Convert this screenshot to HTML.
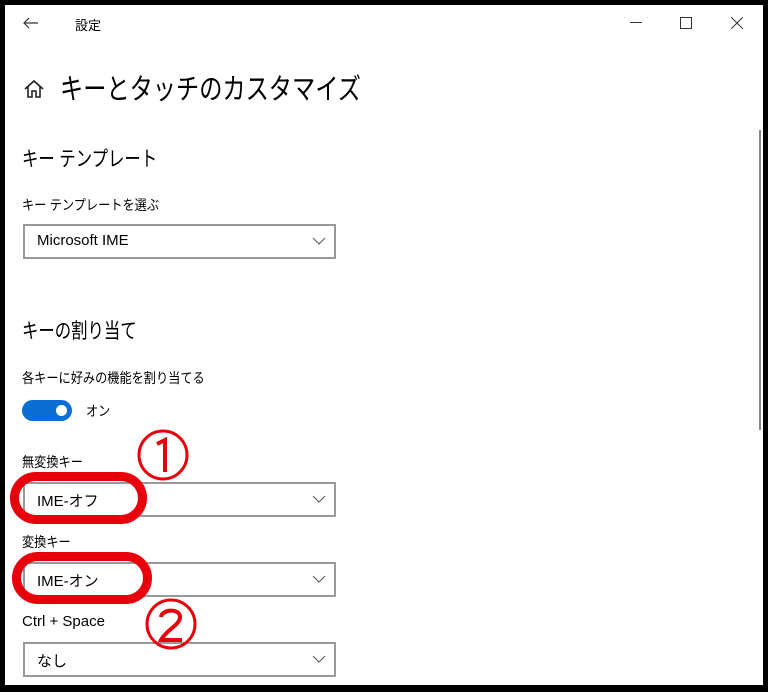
<!DOCTYPE html><html><head><meta charset="utf-8"><style>
body{margin:0;width:768px;height:692px;background:#000;position:relative;overflow:hidden;font-family:"Liberation Sans","Noto Sans CJK JP",sans-serif;color:#000}
#w{position:absolute;left:5px;top:5px;width:758px;height:680px;background:#fff}
.t{position:absolute;white-space:nowrap;transform-origin:0 0}
.l{font-size:14px;transform:scaleX(0.87)}
.h{font-size:21px;transform:scaleX(0.78)}
.dd{position:absolute;left:23px;width:309px;height:31px;border:2px solid #999;background:#fff}
.dd span{position:absolute;left:12px;top:6px;font-size:15px}
.dd svg{position:absolute;right:8px;top:11px}
.ov{position:absolute;border:9px solid #e8000a;border-radius:26px;box-sizing:border-box}
</style></head><body><div id="w"></div>
<svg style="position:absolute;left:23px;top:17px" width="16" height="12"><path d="M15 6H1M6 1L1 6L6 11" fill="none" stroke="#333" stroke-width="1.2"/></svg>
<div class="t" style="left:75px;top:15px;font-size:13px">設定</div>
<svg style="position:absolute;left:630px;top:22px" width="12" height="2"><rect width="12" height="1" fill="#333"/></svg>
<svg style="position:absolute;left:680px;top:17px" width="12" height="12"><rect x=".5" y=".5" width="11" height="11" fill="none" stroke="#333"/></svg>
<svg style="position:absolute;left:731px;top:17px" width="12" height="12"><path d="M0 0L12 12M12 0L0 12" stroke="#333"/></svg>
<svg style="position:absolute;left:23px;top:78px" width="22" height="22" viewBox="0 0 22 22"><path d="M2 11L11 3L20 11M5 8V19H9V13H13V19H17V8" fill="none" stroke="#222" stroke-width="1.6"/></svg>
<div class="t" style="left:60px;top:66px;font-size:29px;transform:scaleX(0.8)">キーとタッチのカスタマイズ</div>
<div style="position:absolute;left:759px;top:130px;width:2px;height:300px;background:#888"></div>
<div class="t h" style="left:22px;top:143px">キー テンプレート</div>
<div class="t l" style="left:22px;top:195px">キー テンプレートを選ぶ</div>
<div class="dd" style="top:224px"><span>Microsoft IME</span><svg width="14" height="8"><path d="M1 1L7 7L13 1" fill="none" stroke="#555"/></svg></div>
<div class="t h" style="left:22px;top:315px">キーの割り当て</div>
<div class="t l" style="left:22px;top:368px">各キーに好みの機能を割り当てる</div>
<div style="position:absolute;left:22px;top:400px;width:50px;height:21px;border-radius:11px;background:#0a6fd4"></div>
<div style="position:absolute;left:56px;top:405px;width:11px;height:11px;border-radius:50%;background:#fff"></div>
<div class="t l" style="left:86px;top:401px">オン</div>
<div class="t l" style="left:22px;top:452px">無変換キー</div>
<div class="dd" style="top:482px"><span>IME-オフ</span><svg width="14" height="8"><path d="M1 1L7 7L13 1" fill="none" stroke="#555"/></svg></div>
<div class="t l" style="left:22px;top:532px">変換キー</div>
<div class="dd" style="top:562px"><span>IME-オン</span><svg width="14" height="8"><path d="M1 1L7 7L13 1" fill="none" stroke="#555"/></svg></div>
<div class="t" style="left:22px;top:613px;font-size:15px">Ctrl + Space</div>
<div class="dd" style="top:642px"><span>なし</span><svg width="14" height="8"><path d="M1 1L7 7L13 1" fill="none" stroke="#555"/></svg></div>
<div class="ov" style="left:10px;top:472px;width:137px;height:52px"></div>
<div class="ov" style="left:12px;top:552px;width:140px;height:52px"></div>
<svg style="position:absolute;left:136px;top:428px" width="56" height="56"><circle cx="27" cy="27" r="24" fill="none" stroke="#e8000a" stroke-width="3"/><path d="M21 16L29 12V44" fill="none" stroke="#e8000a" stroke-width="4"/></svg>
<svg style="position:absolute;left:144px;top:597px" width="56" height="56"><circle cx="27" cy="27" r="24" fill="none" stroke="#e8000a" stroke-width="3"/><path d="M17 20C18 12 36 11 36 20C36 28 22 33 17 43H38" fill="none" stroke="#e8000a" stroke-width="4"/></svg>
</body></html>
